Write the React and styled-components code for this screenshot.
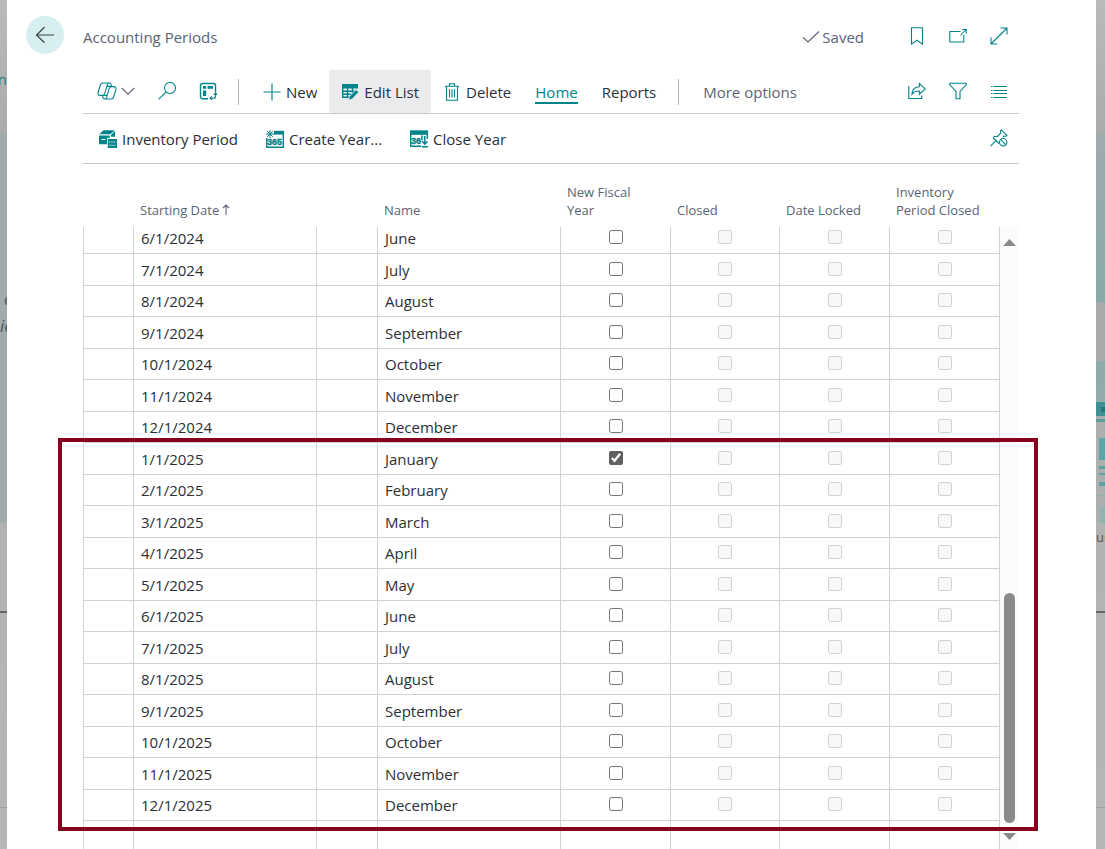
import React from 'react';
import styled, { createGlobalStyle } from 'styled-components';

const TEAL = '#008489';
const SLATE = '#5a6474';

const GlobalStyle = createGlobalStyle`
    * {
        box-sizing: border-box;
    }
    body {
        margin: 0;
        background: #ffffff;
        color: #2b2f36;
        font-family: "Open Sans", "Noto Sans", sans-serif;
        font-size: 15px;
        line-height: 20px;
    }
    button {
        font: inherit;
        color: inherit;
        border: 0;
        background: none;
        cursor: pointer;
    }
`

const Page = styled.div`
    display: flex;
    min-height: 100vh;
`

const Backdrop = styled.div`
    display: flex;
    flex-direction: column;
    flex: none;
    width: ${props => props.$width}px;
    overflow: hidden;
    background: linear-gradient(#adacac, #b6b6b6);
`

const BackdropTop = styled.div`
    display: flex;
    justify-content: flex-end;
    height: 134px;
    padding-top: 69px;
    background: linear-gradient(#bbbabb, #acabac);
    color: #2f7d80;
`

const BackdropHero = styled.div`
    height: 389px;
    background: ${props => props.$fill};
    color: #4b5557;
    font-size: 17px;
    font-style: italic;
    line-height: 27px;
    white-space: nowrap;
`

const HeroText = styled.div`
    padding-top: 151px;
    text-indent: 4px;

    span {
        display: block;
        text-indent: 0;
    }
`

const BackdropCaption = styled.div`
    height: 88px;
    padding-top: 4px;
    color: #555555;
    font-size: 13px;
    white-space: nowrap;
`

const BackdropSection = styled.div`
    height: 197px;
    border-top: 2px solid #666666;
    border-bottom: 1px solid #a0a0a0;
`

const Dialog = styled.main`
    flex: 1;
    min-width: 0;
    padding-right: 77px;
    background: #ffffff;
`

const Header = styled.header`
    display: flex;
    align-items: center;
    height: 70px;
    padding-left: 19px;
    color: ${SLATE};
`

const BackButton = styled.button`
    display: flex;
    align-items: center;
    justify-content: center;
    width: 38px;
    height: 38px;
    margin-right: 19px;
    padding: 0;
    border-radius: 50%;
    background: #d8eff1;
`

const Title = styled.h1`
    flex: 1;
    margin: 0;
    padding-top: 4px;
    font-size: 15px;
    font-weight: 400;
`

const Saved = styled.span`
    display: flex;
    align-items: center;
    gap: 2px;
    padding-top: 4px;
    margin-right: 32px;
`

const HeaderActions = styled.div`
    display: flex;
    padding-top: 4px;
`

const Content = styled.div`
    padding-left: 76px;
`

const Toolbar = styled.div`
    display: flex;
    align-items: center;
    height: 44px;
    padding-left: 12px;
    border-bottom: 1px solid #c9cbce;
`

const SubToolbar = styled(Toolbar)`
    height: 50px;
    gap: 28px;
    padding-left: 16px;
`

const IconButton = styled.button`
    display: flex;
    align-items: center;
    justify-content: center;
    width: 41px;
    height: 32px;
    padding: 0 0 2px;
    color: ${TEAL};
`

const CopilotButton = styled(IconButton)`
    gap: 4px;
    margin-right: 10px;
`

const Command = styled.button`
    display: flex;
    align-items: center;
    gap: 5px;
    height: 43px;
    padding: 0 12px;
    border-radius: 2px;
    background: ${props => (props.$active ? '#eaebec' : 'none')};
    color: ${props => (props.$muted ? SLATE : '#2b2f36')};
    white-space: nowrap;

    svg {
        color: ${TEAL};
    }
`

const SubCommand = styled(Command)`
    gap: 5px;
    padding: 0;
`

const Tab = styled(Command)`
    color: ${props => (props.$selected ? TEAL : '#2b2f36')};

    span {
        border-bottom: 2px solid ${props => (props.$selected ? TEAL : 'transparent')};
        margin-top: 2px;
    }
`

const Divider = styled.span`
    width: 1px;
    height: 26px;
    margin: 0 12px 0 10px;
    background: #b4b7bb;
`

const Spacer = styled.span`
    flex: 1;
`

const Grid = styled.section`
    position: relative;
    display: flex;
`

const Table = styled.table`
    flex: 1;
    min-width: 0;
    table-layout: fixed;
    border-spacing: 0;
`

const Col = styled.col`
    width: ${props => props.$width}px;
`

const HeadCell = styled.th`
    height: 63px;
    padding: 0 14px 8px 6px;
    color: ${SLATE};
    font-size: 13px;
    font-weight: 400;
    line-height: 18px;
    text-align: left;
    vertical-align: bottom;

    svg {
        margin-left: 3px;
    }
`

const Row = styled.tr`
    height: ${props => props.$height}px;
`

const Cell = styled.td`
    padding: 0 7px 5px;
    border-right: 1px solid #d0d2d4;
    border-bottom: ${props => (props.$open ? '0' : '1px solid #d0d2d4')};
    vertical-align: bottom;

    &:first-child {
        border-left: 1px solid #d0d2d4;
    }
`

const Checkbox = styled.input`
    display: block;
    width: 14px;
    height: 14px;
    margin: 0 auto 4px;
    accent-color: #606060;
`

const ScrollTrack = styled.div`
    display: flex;
    flex-direction: column;
    align-items: center;
    width: 19px;
    margin-top: 63px;
    padding: 11px 0 8px;
    background: #fbfbfb;
    color: #8a8a8a;
`

const ScrollThumb = styled.div`
    flex: 230;
    width: 11px;
    margin-bottom: 10px;
    border-radius: 6px;
    background: #8a8a8a;
`

const ScrollSpace = styled.div`
    flex: 347;
`

const Highlight = styled.div`
    position: absolute;
    top: 274px;
    right: -19px;
    bottom: 18px;
    left: -25px;
    border: 4px solid #87001f;
    pointer-events: none;
`

const Icon = ({ children, width = 18, height = 18 }) => (
    <svg
        width={width}
        height={height}
        viewBox={`0 0 ${width} ${height}`}
        fill="none"
        stroke="currentColor"
        strokeWidth="1.1"
        aria-hidden="true"
    >
        {children}
    </svg>
)

const BackIcon = () => (
    <Icon width={20} height={18}>
        <g stroke="#3c4248" strokeWidth="1.2">
            <path d="M1.5 9H19M9.5 1.2 1.5 9l8 7.8" />
        </g>
    </Icon>
)

const CheckIcon = () => (
    <Icon>
        <path d="M1 9.5 6 14 17 3.5" />
    </Icon>
)

const BookmarkIcon = () => (
    <Icon>
        <path d="M3.5.8h11v16.3L9 13.2l-5.5 3.9z" />
    </Icon>
)

const PopOutIcon = () => (
    <Icon>
        <path d="M11.500 4.500H.8v10.500h14V8M11.500 8.500l5.500-6M13.200 2.500h4v4" />
    </Icon>
)

const ExpandIcon = () => (
    <Icon>
        <path d="M1.5 16.5l15-15M10.500 1h6.500v6.500M1 10.500V17h6.500" />
    </Icon>
)

// two slanted ribbons folded over each other
const CopilotIcon = () => (
    <Icon width={20} height={18}>
        <path d="M5.800 1h6.400c1.200 0 1.700.6 2 1.800l.3 1.400M5.800 1C4.600 1 3.800 1.700 3.400 3L1.200 10c-.6 2 .1 3.400 1.900 3.400h2.400c1.100 0 1.800-.6 2.200-1.800l2.500-8.500C10.600 1.700 11.200 1 12.200 1" />
        <path d="M14.200 17H7.800c-1.200 0-1.700-.6-2-1.800l-.3-1.600M14.200 17c1.200 0 2-.7 2.400-2l2.200-7c.6-2-.1-3.400-1.900-3.400h-2.400c-1.100 0-1.800.6-2.200 1.800l-2.500 8.500c-.4 1.400-1 2.100-2 2.100M10 4.400h4M6 13.400h4.300" />
    </Icon>
)

const ChevronIcon = () => (
    <Icon width={14} height={10}>
        <path d="M.8 2 7 8.200 13.200 2" stroke="#5a6474" />
    </Icon>
)

const SearchIcon = () => (
    <Icon>
        <circle cx="12" cy="6" r="5.500" />
        <path d="M8.200 9.800.5 17.300" />
    </Icon>
)

const LayoutIcon = () => (
    <Icon>
        <path d="M9 16.800H3.500a2 2 0 0 1-2-2V3.500a2 2 0 0 1 2-2h11a2 2 0 0 1 2 2V10" strokeWidth="1.400" />
        <path d="M4 4h3.200v2.800H4zM8.600 4h5.400v2.800H8.600zM4 8.400h3.200V14H4z" fill="currentColor" stroke="none" />
        <path d="M16.500 11.500v2.700a2 2 0 0 1-2 2h-3.200M14.700 12.800l1.800-2 1.600 2M13 14.300l-2 1.900 2 1.500" />
    </Icon>
)

const PlusIcon = () => (
    <Icon>
        <path d="M9 .5v17M.5 9h17" />
    </Icon>
)

const EditListIcon = () => (
    <Icon>
        <path d="M1 1h16v4.500H1z" fill="currentColor" stroke="none" />
        <path d="M1.700 5v9.300H8M6.500 5v9.300M11.500 5v5M1.700 8.200h12M1.700 11.300h8.500" strokeWidth="1.400" />
        <path d="M7.500 17.200l1-4L15 6.600l2.700 2.700-6.500 6.800z" fill="currentColor" stroke="#eaebec" strokeWidth=".8" />
    </Icon>
)

const DeleteIcon = () => (
    <Icon>
        <path d="M2 3.200h14M6.500 3V.8h5V3M3.500 3.500v13.700h11V3.500M6.500 6.200v8.300M9 6.200v8.300M11.500 6.200v8.300" />
    </Icon>
)

const ShareIcon = () => (
    <Icon>
        <path d="M.8 4v12.500h13V13.500" />
        <path d="M4 12.200c.3-4.600 3-7.400 7.400-7.400V1.500l5.800 5.400-5.800 5.300V9c-3.400 0-5.700.8-7.400 3.200z" />
    </Icon>
)

const FilterIcon = () => (
    <Icon>
        <path d="M.8 1.300h16.400v1.500L11 9.500v7.200H7V9.500L.8 2.800z" />
    </Icon>
)

const ListIcon = () => (
    <Icon>
        <path d="M3.500 4.500H17M3.500 8.500H17M3.500 11.500H17M3.500 15.500H17" />
        <path d="M1 4.500h1.500M1 8.500h1.500M1 11.500h1.500M1 15.500h1.500" />
    </Icon>
)

const UnpinIcon = () => (
    <Icon>
        <path d="M.5 17.200 6 11.700M3 8.500l6 6M3 8.500c1.500-1.200 3-1.500 4.500-1l3.200-3.400-.2-2.400.9-.8 5.600 5.400-.9.900-2.200-.2-1 1" />
        <circle cx="13.200" cy="13.200" r="3.700" />
        <path d="M10.600 10.700l5.200 5" />
    </Icon>
)

const InventoryIcon = () => (
    <Icon>
        <g fill="currentColor" stroke="none">
            <path d="M4.500.3h11l-4 4H.3zM16 .8v6h-4V5z" />
            <path d="M0 5.500h10.800v2.300H8v6.500H0z" />
            <path d="M8.800 9H18v9H8.800z" />
        </g>
        <path d="M2.500 9.500h4" stroke="#ffffff" />
        <path d="M10.200 12h7M10.200 15.300h7" stroke="#ffffff" strokeDasharray="1.200 1" />
    </Icon>
)

const CreateYearIcon = () => (
    <Icon>
        <path d="M8 .8h10v3.800H8z" fill="currentColor" stroke="none" />
        <path d="M.8 8v9.300h16.500V3" strokeWidth="1.400" />
        <path d="M4 0v8M0 4h8M1.200 1.200l5.600 5.600M6.800 1.200 1.200 6.800" strokeWidth="1" />
        <text x="1" y="14.500" fontFamily="Liberation Sans, sans-serif" fontSize="9" fontWeight="700" fill="currentColor" strokeWidth=".4">365</text>
    </Icon>
)

const CloseYearIcon = () => (
    <Icon>
        <path d="M0 .3h18v4.500H0z" fill="currentColor" stroke="none" />
        <path d="M.7 4v12.300h10.500M17.300 4v5" strokeWidth="1.400" />
        <text x="1" y="13.500" fontFamily="Liberation Sans, sans-serif" fontSize="9" fontWeight="700" fill="currentColor" strokeWidth=".4">36</text>
        <path d="M12 5.500v4.500M14.800 6v8M12.200 11.300l2.600 2.900 2.700-2.900M12 16.700h6" strokeWidth="1.500" />
    </Icon>
)

const SortIcon = () => (
    <Icon width={8} height={11}>
        <path d="M4 11V1M1 4l3-3 3 3" />
    </Icon>
)

const ScrollArrow = ({ down }) => (
    <svg width="13" height="8" viewBox="0 0 13 8" fill="currentColor" aria-hidden="true">
        <path d={down ? 'M0 0h13L6.500 7z' : 'M0 8h13L6.500 1z'} />
    </svg>
)

const HeroArt = () => (
    <svg width="9" height="389" viewBox="0 0 9 389" aria-hidden="true">
        <circle cx="0" cy="198" r="30" fill="#a8aaac" />
        <path d="M0 268h9v14H0z" fill="#3f9193" />
        <path d="M5 273h4v5H5z" fill="#23777b" />
        <path d="M0 282h9v107H0z" fill="#adafaf" />
        <path d="M0 285h9v3H0z" fill="#5d9d9d" />
        <path d="M3 304h6v22H3z" fill="#5ea5a6" />
        <path d="M3 332h6v3H3zM3 339h6v2H3zM3 348h6v4H3z" fill="#5fa0a1" />
        <path d="M0 361h9v1H0z" fill="#8fb0ae" />
        <path d="M4 373h5v16H4z" fill="#93b3b0" />
    </svg>
)

const columns = [
    { key: 'marker', width: 51, title: '' },
    { key: 'date', width: 183, title: 'Starting Date', sorted: true },
    { key: 'more', width: 61, title: '' },
    { key: 'name', width: 183, title: 'Name' },
    { key: 'fiscal', width: 110, title: 'New Fiscal Year' },
    { key: 'closed', width: 109, title: 'Closed' },
    { key: 'locked', width: 110, title: 'Date Locked' },
    { key: 'inventory', width: 110, title: 'Inventory Period Closed' },
]

const months = [
    'January', 'February', 'March', 'April', 'May', 'June',
    'July', 'August', 'September', 'October', 'November', 'December',
]

const yearPeriods = (year) => months.map((name, i) => ({
    date: `${i + 1}/1/${year}`,
    name,
    newFiscalYear: i === 0,
}))

// the list is scrolled so that June is cut off under the header
const periods = [...yearPeriods(2024).slice(5), ...yearPeriods(2025)]

const rowHeight = (index) => {
    if (index === 0) {
        return 27;
    }
    return index % 2 ? 32 : 31;
}

const PeriodRow = ({ period, height }) => {
    const { date, name, newFiscalYear } = period;

    return (
        <Row $height={height}>
            <Cell />
            <Cell>{date}</Cell>
            <Cell />
            <Cell>{name}</Cell>
            <Cell>
                <Checkbox type="checkbox" defaultChecked={newFiscalYear} aria-label={`New Fiscal Year ${date}`} />
            </Cell>
            {['Closed', 'Date Locked', 'Inventory Period Closed'].map(label => (
                <Cell key={label}>
                    <Checkbox type="checkbox" disabled aria-label={`${label} ${date}`} />
                </Cell>
            ))}
        </Row>
    );
}

const App = () => (
    <Page>
        <GlobalStyle />
        <Backdrop $width={7}>
            <BackdropTop>n</BackdropTop>
            <BackdropHero $fill="#a1abae">
                <HeroText>c<span>ic</span></HeroText>
            </BackdropHero>
            <BackdropCaption />
            <BackdropSection />
        </Backdrop>

        <Dialog>
            <Header>
                <BackButton aria-label="Back"><BackIcon /></BackButton>
                <Title>Accounting Periods</Title>
                <Saved><CheckIcon />Saved</Saved>
                <HeaderActions>
                    <IconButton aria-label="Bookmark"><BookmarkIcon /></IconButton>
                    <IconButton aria-label="Open in new window"><PopOutIcon /></IconButton>
                    <IconButton aria-label="Expand"><ExpandIcon /></IconButton>
                </HeaderActions>
            </Header>

            <Content>
                <Toolbar>
                    <CopilotButton aria-label="Copilot"><CopilotIcon /><ChevronIcon /></CopilotButton>
                    <IconButton aria-label="Search"><SearchIcon /></IconButton>
                    <IconButton aria-label="Analyze"><LayoutIcon /></IconButton>
                    <Divider />
                    <Command><PlusIcon />New</Command>
                    <Command $active><EditListIcon />Edit List</Command>
                    <Command><DeleteIcon />Delete</Command>
                    <Tab $selected><span>Home</span></Tab>
                    <Tab><span>Reports</span></Tab>
                    <Divider />
                    <Command $muted>More options</Command>
                    <Spacer />
                    <IconButton aria-label="Share"><ShareIcon /></IconButton>
                    <IconButton aria-label="Filter"><FilterIcon /></IconButton>
                    <IconButton aria-label="List view"><ListIcon /></IconButton>
                </Toolbar>

                <SubToolbar>
                    <SubCommand><InventoryIcon />Inventory Period</SubCommand>
                    <SubCommand><CreateYearIcon />Create Year...</SubCommand>
                    <SubCommand><CloseYearIcon />Close Year</SubCommand>
                    <Spacer />
                    <IconButton aria-label="Unpin"><UnpinIcon /></IconButton>
                </SubToolbar>

                <Grid>
                    <Table>
                        <colgroup>
                            {columns.map(col => <Col key={col.key} $width={col.width} />)}
                        </colgroup>
                        <thead>
                            <tr>
                                {columns.map(col => (
                                    <HeadCell key={col.key} scope="col">
                                        {col.title}
                                        {col.sorted && <SortIcon />}
                                    </HeadCell>
                                ))}
                            </tr>
                        </thead>
                        <tbody>
                            {periods.map((period, i) => (
                                <PeriodRow key={period.date} period={period} height={rowHeight(i)} />
                            ))}
                            <Row $height={28}>
                                {columns.map(col => <Cell $open key={col.key} />)}
                            </Row>
                        </tbody>
                    </Table>
                    <ScrollTrack>
                        <ScrollArrow />
                        <ScrollSpace />
                        <ScrollThumb />
                        <ScrollArrow down />
                    </ScrollTrack>
                    <Highlight />
                </Grid>
            </Content>
        </Dialog>

        <Backdrop $width={9}>
            <BackdropTop />
            <BackdropHero $fill="linear-gradient(#a0abae, #86a9a8 200px, #96acab 268px)">
                <HeroArt />
            </BackdropHero>
            <BackdropCaption>ur</BackdropCaption>
            <BackdropSection />
        </Backdrop>
    </Page>
)

export default App;
